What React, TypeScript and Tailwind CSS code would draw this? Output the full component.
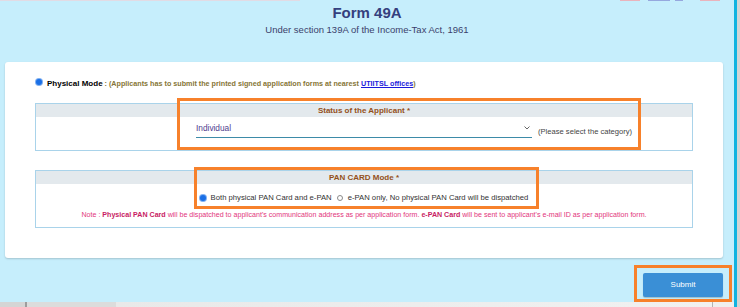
function Radio({ checked }: { checked?: boolean }) {
  return checked ? (
    <span className="inline-block w-[6px] h-[6px] rounded-full bg-[#1a6fe6] ring-1 ring-[#7fb0f2] shrink-0" />
  ) : (
    <span className="inline-block w-[6px] h-[6px] rounded-full border border-[#8a8a8a] bg-white shrink-0" />
  )
}

function BoxHeader({ title }: { title: string }) {
  return (
    <div className="h-[13px] bg-[#e3e9ed] text-center text-[8px] leading-[13px] font-bold text-[#93501a]">
      {title}
    </div>
  )
}

export default function App() {
  return (
    <div className="relative flex w-[740px] h-[307px] overflow-hidden bg-[#c6eefc] font-['Liberation_Sans',Arial,sans-serif]">
      <div className="flex flex-col w-[734px]">
        {/* cropped strip from the page above */}
        <div className="flex h-px shrink-0">
          <div className="w-[300px] bg-[#e2dbe4]" />
          <div className="w-[320px]" />
          <div className="w-[20px] bg-[#eab3bc]" />
          <div className="w-[8px]" />
          <div className="w-[22px] bg-[#96a8de]" />
          <div className="w-[5px]" />
          <div className="w-[8px] bg-[#96a8de]" />
          <div className="w-[17px]" />
          <div className="w-[20px] bg-[#eab3bc]" />
        </div>

        <main className="flex-1 flex flex-col px-[5px]">
          <h1 className="mt-[3px] text-center text-[15px] leading-[17px] font-bold text-[#34407e]">Form 49A</h1>
          <p className="mt-[3px] text-center text-[9.5px] leading-[12px] text-[#3b3f6b]">
            Under section 139A of the Income-Tax Act, 1961
          </p>

          <section className="mt-[26px] w-[718px] h-[196px] bg-white rounded-[3px] shadow-[0_1px_2px_rgba(0,0,0,0.18)] px-[30px] pt-[15px]">
            <div className="flex items-center gap-[5px] h-[10px] pl-px">
              <Radio checked />
              <p className="whitespace-nowrap leading-[10px]">
                <span className="text-[8px] font-bold text-black">Physical Mode</span>
                <span className="text-[7.2px] font-bold text-[#867536]">
                  {' '}: (Applicants has to submit the printed signed application forms at nearest{' '}
                  <span className="text-[#1a1adb] underline">UTIITSL offices</span>)
                </span>
              </p>
            </div>

            <div className="mt-[16px] w-[658px] border border-[#a9d3ea]">
              <BoxHeader title="Status of the Applicant *" />
              <div className="h-[33px] pt-[5px] pl-[160px] flex items-start gap-[6px]">
                <div className="relative w-[336px] h-[16px] border-b border-[#3d8ba8]">
                  <span className="block text-[8.3px] leading-[12px] text-[#4f3d8e]">Individual</span>
                  <svg className="absolute right-[2px] top-[4px]" width="6" height="4" viewBox="0 0 6 4">
                    <polyline points="0.5,0.5 3,3 5.5,0.5" fill="none" stroke="#555" strokeWidth="0.9" />
                  </svg>
                </div>
                <span className="mt-[5px] text-[7.6px] leading-[10px] text-[#444] whitespace-nowrap">
                  (Please select the category)
                </span>
              </div>
            </div>

            <div className="mt-[19px] w-[658px] border border-[#a9d3ea]">
              <BoxHeader title="PAN CARD Mode *" />
              <div className="h-[43px] pt-[9px] flex flex-col items-center">
                <div className="flex items-center h-[10px] text-[7.7px] leading-[10px] text-[#333] whitespace-nowrap">
                  <Radio checked />
                  <span className="ml-[5px]">Both physical PAN Card and e-PAN</span>
                  <span className="ml-[5px] flex"><Radio /></span>
                  <span className="ml-[5px]">e-PAN only, No physical PAN Card will be dispatched</span>
                </div>
                <p className="mt-[8px] text-[7.1px] leading-[9px] text-[#e2357c] whitespace-nowrap">
                  Note : <b className="text-[#c81c63]">Physical PAN Card</b> will be dispatched to applicant's communication
                  address as per application form. <b className="text-[#c81c63]">e-PAN Card</b> will be sent to applicant's
                  e-mail ID as per application form.
                </p>
              </div>
            </div>
          </section>

          <button className="mt-[15px] self-end mr-[6px] w-[80px] h-[24px] rounded-[2px] bg-[#3a8fd6] text-white text-[8px] shadow-[0_1px_1px_rgba(0,0,0,0.2)]">
            Submit
          </button>
        </main>

        <div className="flex h-[5px] shrink-0">
          <div className="w-[25px] bg-[#d5d5d5]" />
          <div className="w-[2px] bg-[#9d9d9d]" />
          <div className="w-[89px] bg-[#dcdcdc]" />
          <div className="w-[596px] bg-gradient-to-r from-[#e9e9e9] to-[#f1f1f1]" />
          <div className="w-px bg-[#b3b3b3]" />
          <div className="flex-1 bg-[#efefef]" />
        </div>
      </div>
      <div className="w-[3px] bg-[#10b3e0]" />
      <div className="w-[3px] bg-[#d4d4d4]" />

      {/* highlight annotations */}
      <div className="absolute left-[177px] top-[98px] w-[464px] h-[52px] border-[3px] border-[#f7812b]" />
      <div className="absolute left-[194px] top-[167px] w-[345px] h-[42px] border-[3px] border-[#f7812b]" />
      <div className="absolute left-[634px] top-[265px] w-[98px] h-[37px] border-[3px] border-[#f7812b]" />
    </div>
  )
}
